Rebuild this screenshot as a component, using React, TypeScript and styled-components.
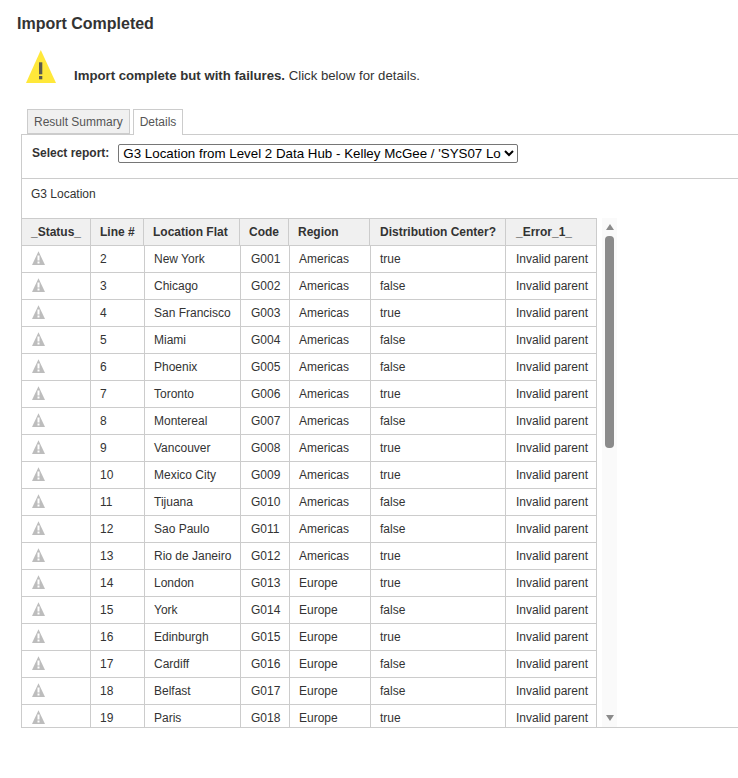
import React from "react";
import styled, { createGlobalStyle } from "styled-components";

const GlobalStyle = createGlobalStyle`
  html, body {
    margin: 0;
    padding: 0;
    background: #fff;
  }
  body {
    font-family: "Liberation Sans", Arial, sans-serif;
    font-size: 12px;
    color: #333;
  }
`;

const Page = styled.div`
  width: 738px;
  height: 778px;
  overflow: hidden;
`;

const Title = styled.h1`
  margin: 0;
  padding: 14px 0 0 17px;
  height: 37px;
  box-sizing: border-box;
  font-size: 16px;
  line-height: 19px;
  font-weight: bold;
  color: #333;
`;

const Notice = styled.div`
  display: flex;
  align-items: flex-start;
  height: 38px;
  margin-top: 13px;
  padding-left: 26px;
`;

const NoticeText = styled.div`
  margin: 18px 0 0 18px;
  font-size: 13.2px;
  line-height: 16px;
  b {
    font-weight: bold;
  }
`;

const Tabs = styled.div`
  display: flex;
  gap: 3px;
  margin-top: 21px;
  padding-left: 27px;
  height: 26px;
`;

const Tab = styled.div<{ $active?: boolean }>`
  box-sizing: border-box;
  height: ${(p) => (p.$active ? "26px" : "25px")};
  padding: 0 6px;
  line-height: 24px;
  border: 1px solid #ccc;
  border-bottom: ${(p) => (p.$active ? "none" : "1px solid #ccc")};
  background: ${(p) => (p.$active ? "#fff" : "#f0f0f0")};
  color: #555;
  position: relative;
  z-index: 1;
`;

const Panel = styled.div`
  margin-left: 21px;
  margin-top: -1px;
  height: 594px;
  box-sizing: border-box;
  border: 1px solid #ccc;
  border-right: none;
  display: flex;
  flex-direction: column;
`;

const ReportBar = styled.div`
  display: flex;
  align-items: center;
  height: 44px;
  flex: none;
  box-sizing: border-box;
  border-bottom: 1px solid #ccc;
  padding: 0 0 7px 10px;
  gap: 9px;
`;

const ReportLabel = styled.label`
  font-weight: bold;
`;

const ReportSelect = styled.select`
  width: 400px;
  height: 19px;
  box-sizing: border-box;
  font-family: "Liberation Sans", Arial, sans-serif;
  font-size: 13.33px;
  color: #000;
  background: #fff;
  border: 1px solid #767676;
  border-radius: 2px;
  padding: 0;
`;

const ReportName = styled.div`
  flex: none;
  height: 39px;
  padding: 8px 0 0 9px;
  box-sizing: border-box;
  line-height: 15px;
`;

const GridArea = styled.div`
  flex: 1;
  min-height: 0;
  display: flex;
  overflow: hidden;
`;

const GridColumn = styled.div`
  width: 575px;
  flex: none;
`;

// header and body are two tables, their column lines are a pixel apart
const Table = styled.table`
  display: block;
  table-layout: fixed;
  width: 575px;
  border-collapse: separate;
  border-spacing: 0;
`;

const HeadTable = styled(Table)`
  border-top: 1px solid #ccc;
`;

const HeadCell = styled.th`
  box-sizing: border-box;
  height: 27px;
  padding: 0 0 0 9px;
  background: #f0f0f0;
  border-right: 1px solid #ccc;
  border-bottom: 1px solid #ccc;
  font-weight: bold;
  text-align: left;
  white-space: nowrap;
  &:nth-child(n + 6) {
    padding-left: 10px;
  }
`;

const Cell = styled.td`
  box-sizing: border-box;
  height: 27px;
  padding: 0 0 0 9px;
  border-right: 1px solid #ccc;
  border-bottom: 1px solid #ccc;
  white-space: nowrap;
  overflow: hidden;
  &:nth-child(4),
  &:nth-child(7) {
    padding-left: 10px;
  }
`;

const StatusIcon = styled.svg`
  display: block;
  margin: 0 0 2px 1px;
`;

const Scrollbar = styled.div`
  width: 15px;
  margin-left: 5px;
  flex: none;
  background: #fafafa;
  display: flex;
  flex-direction: column;
  align-items: center;
  position: relative;
`;

const ScrollThumb = styled.div`
  width: 9px;
  height: 212px;
  margin-top: 6px;
  border-radius: 4px;
  background: #8b8b8b;
`;

const Arrow = styled.div<{ $down?: boolean }>`
  flex: none;
  width: 0;
  height: 0;
  border-left: 4.5px solid transparent;
  border-right: 4.5px solid transparent;
  ${(p) =>
    p.$down
      ? "border-top: 6px solid #8b8b8b; position: absolute; bottom: 6px;"
      : "border-bottom: 6px solid #8b8b8b; margin-top: 6px;"}
`;

const headColumns = [
  { title: "_Status_", width: 69 },
  { title: "Line #", width: 53 },
  { title: "Location Flat", width: 96 },
  { title: "Code", width: 49 },
  { title: "Region", width: 81 },
  { title: "Distribution Center?", width: 136 },
  { title: "_Error_1_", width: 91 },
];

const bodyWidths = [69, 54, 96, 49, 81, 135, 91];

const rows: [number, string, string, string, boolean][] = [
  [2, "New York", "G001", "Americas", true],
  [3, "Chicago", "G002", "Americas", false],
  [4, "San Francisco", "G003", "Americas", true],
  [5, "Miami", "G004", "Americas", false],
  [6, "Phoenix", "G005", "Americas", false],
  [7, "Toronto", "G006", "Americas", true],
  [8, "Montereal", "G007", "Americas", false],
  [9, "Vancouver", "G008", "Americas", true],
  [10, "Mexico City", "G009", "Americas", true],
  [11, "Tijuana", "G010", "Americas", false],
  [12, "Sao Paulo", "G011", "Americas", false],
  [13, "Rio de Janeiro", "G012", "Americas", true],
  [14, "London", "G013", "Europe", true],
  [15, "York", "G014", "Europe", false],
  [16, "Edinburgh", "G015", "Europe", true],
  [17, "Cardiff", "G016", "Europe", false],
  [18, "Belfast", "G017", "Europe", false],
  [19, "Paris", "G018", "Europe", true],
];

const WarningLarge = () => (
  <svg width="30" height="33" viewBox="0 0 30 33">
    <path d="M14.8 0 L30 33 L0 33 Z" fill="#ffe83a" />
    <rect x="13" y="12.3" width="3.3" height="12" fill="#5a5a50" />
    <rect x="13" y="26" width="3.3" height="3.3" fill="#5a5a50" />
  </svg>
);

const WarningSmall = () => (
  <StatusIcon width="13" height="14" viewBox="0 0 13 14">
    <path d="M6.5 0.3 L13 14 H0 Z" fill="#bdbdbd" />
    <rect x="5.5" y="4.5" width="2" height="5" fill="#fff" />
    <rect x="5.5" y="10.5" width="2" height="2" fill="#fff" />
  </StatusIcon>
);

const App: React.FC = () => {
  return (
    <Page>
      <GlobalStyle />
      <Title>Import Completed</Title>
      <Notice>
        <WarningLarge />
        <NoticeText>
          <b>Import complete but with failures.</b> Click below for details.
        </NoticeText>
      </Notice>
      <Tabs>
        <Tab>Result Summary</Tab>
        <Tab $active>Details</Tab>
      </Tabs>
      <Panel>
        <ReportBar>
          <ReportLabel>Select report:</ReportLabel>
          <ReportSelect defaultValue="g3">
            <option value="g3">
              G3 Location from Level 2 Data Hub - Kelley McGee / 'SYS07 Location'
            </option>
          </ReportSelect>
        </ReportBar>
        <ReportName>G3 Location</ReportName>
        <GridArea>
          <GridColumn>
            <HeadTable>
              <colgroup>
                {headColumns.map((c) => (
                  <col key={c.title} style={{ width: c.width }} />
                ))}
              </colgroup>
              <thead>
                <tr>
                  {headColumns.map((c) => (
                    <HeadCell key={c.title}>{c.title}</HeadCell>
                  ))}
                </tr>
              </thead>
            </HeadTable>
            <Table>
              <colgroup>
                {bodyWidths.map((w, i) => (
                  <col key={i} style={{ width: w }} />
                ))}
              </colgroup>
              <tbody>
                {rows.map(([line, city, code, region, dc]) => (
                  <tr key={line}>
                    <Cell>
                      <WarningSmall />
                    </Cell>
                    <Cell>{line}</Cell>
                    <Cell>{city}</Cell>
                    <Cell>{code}</Cell>
                    <Cell>{region}</Cell>
                    <Cell>{String(dc)}</Cell>
                    <Cell>Invalid parent</Cell>
                  </tr>
                ))}
              </tbody>
            </Table>
          </GridColumn>
          <Scrollbar>
            <Arrow />
            <ScrollThumb />
            <Arrow $down />
          </Scrollbar>
        </GridArea>
      </Panel>
    </Page>
  );
};

export default App;
